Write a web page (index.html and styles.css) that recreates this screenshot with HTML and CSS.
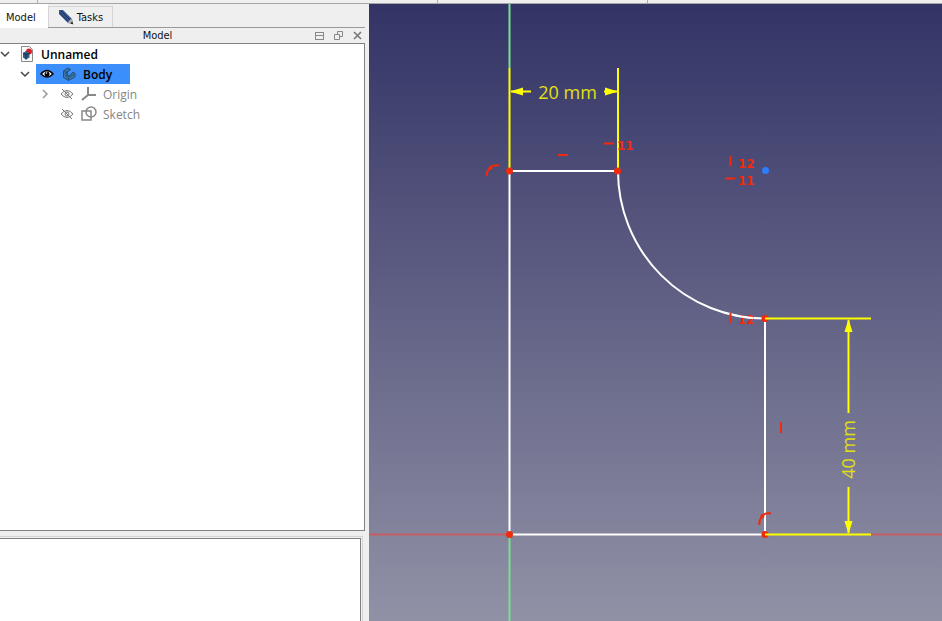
FILE: index.html
```
<!DOCTYPE html>
<html lang="en">
<head>
    <meta charset="UTF-8">
    <meta name="viewport" content="width=device-width, initial-scale=1.0">
    <title>Unnamed - Sketch</title>
    <link rel="stylesheet" href="styles.css">
</head>
<body>
    <header class="toolbar">
        <span class="toolbar-group group-small"></span>
        <span class="toolbar-group group-wide"></span>
        <span class="toolbar-group group-medium"></span>
    </header>
    <main class="workspace">
        <aside class="side">
            <nav class="tabs">
                <button type="button" class="tab active">Model</button>
                <button type="button" class="tab">
                    <svg class="icon" width="16" height="16" viewBox="0 0 16 16">
                        <path d="M1 1 L5 1 L14 10 L15 15 L10 14 L1 5 Z" fill="#34548c"/>
                        <path d="M3 2 L12 11 M1.5 4 L10.5 13" stroke="#1d305c" fill="none"/>
                        <path d="M13.5 9.5 L15 15 L9.5 13.5 Z" fill="#b9b4aa"/>
                        <path d="M14 12.5 L15.5 15.5 L12.5 14.5 Z" fill="#222"/>
                    </svg>
                    Tasks
                </button>
            </nav>
            <div class="dock-title">
                <h1>Model</h1>
                <div class="dock-buttons">
                    <button type="button" aria-label="Collapse">
                        <svg width="9" height="9" viewBox="0 0 9 9"><path d="M.5 1.5 H8.5 M.5 4.5 H8.5 M.5 8.5 H8.5 M.5 1 V9 M8.5 1 V9" fill="none" stroke="#888"/></svg>
                    </button>
                    <button type="button" aria-label="Float">
                        <svg width="9" height="9" viewBox="0 0 9 9"><path d="M3.5 3 V.5 H8.5 V5.5 H6 M.5 3.5 H5.5 V8.5 H.5 Z" fill="none" stroke="#888"/></svg>
                    </button>
                    <button type="button" aria-label="Close">
                        <svg width="9" height="9" viewBox="0 0 9 9"><path d="M1 1 L8 8 M8 1 L1 8" fill="none" stroke="#777" stroke-width="1.6"/></svg>
                    </button>
                </div>
            </div>
            <section class="tree">
                <ul>
                    <li>
                        <div class="row">
                            <button type="button" class="arrow" aria-label="Collapse Unnamed">
                                <svg width="10" height="10" viewBox="0 0 10 10"><path d="M1 3 L5 7 L9 3" fill="none" stroke="#444" stroke-width="1.5"/></svg>
                            </button>
                            <svg class="icon doc" width="12" height="16" viewBox="0 0 12 16">
                                <path d="M.5 .5 H8.5 L11.5 3.5 V15.5 H.5 Z" fill="#fafafa" stroke="#8b8b8b"/>
                                <circle cx="8" cy="5.5" r="3" fill="#d3202c"/>
                                <path d="M2 7 L5 5 L8.5 7.5 V11.5 L5 13.5 L2 11.5 Z" fill="#2f5b84"/>
                                <path d="M2 7 L5 8.5 L8.5 7.5 M5 8.5 V13.5" fill="none" stroke="#16334f"/>
                            </svg>
                            <span class="name strong">Unnamed</span>
                        </div>
                        <ul>
                            <li>
                                <div class="row">
                                    <button type="button" class="arrow" aria-label="Collapse Body">
                                        <svg width="10" height="10" viewBox="0 0 10 10"><path d="M1 3 L5 7 L9 3" fill="none" stroke="#444" stroke-width="1.5"/></svg>
                                    </button>
                                    <div class="item selected">
                                        <button type="button" class="eye" aria-label="Hide Body">
                                            <svg width="14" height="12" viewBox="0 0 14 12">
                                                <path d="M1 6 Q7 -1 13 6 Q7 12 1 6 Z" fill="#fff" stroke="#000" stroke-width="1.5"/>
                                                <circle cx="7" cy="6" r="2.5"/>
                                                <circle cx="6.5" cy="5" r=".8" fill="#fff"/>
                                            </svg>
                                        </button>
                                        <svg class="icon" width="16" height="16" viewBox="0 0 16 16">
                                            <path d="M2.5 5 L7 2 L9.500 3.500 L6.500 5.500 V9.500 L8 10 L12 6 L14 7.500 V11 L7.500 14.500 L2.500 11.500 Z" fill="#3d78ad" stroke="#24507a"/>
                                            <path d="M2.5 5 L5 6.500 V10 L7.500 11.500 V14.500 M5 6.500 L9.500 3.500 M7.500 11.500 L14 7.500" fill="none" stroke="#24507a"/>
                                        </svg>
                                        <span class="name strong">Body</span>
                                    </div>
                                </div>
                                <ul>
                                    <li class="row">
                                        <button type="button" class="arrow" aria-label="Expand Origin">
                                            <svg width="10" height="10" viewBox="0 0 10 10"><path d="M3 1 L7 5 L3 9" fill="none" stroke="#999" stroke-width="1.5"/></svg>
                                        </button>
                                        <div class="item">
                                            <button type="button" class="eye" aria-label="Show Origin">
                                                <svg width="14" height="12" viewBox="0 0 14 12">
                                                    <path d="M1 6 Q7 -1 13 6 Q7 13 1 6 Z M2 1 L12 11" fill="none" stroke="#777"/>
                                                    <circle cx="7" cy="6" r="2" fill="none" stroke="#777"/>
                                                </svg>
                                            </button>
                                            <svg class="icon" width="16" height="16" viewBox="0 0 16 16"><path d="M7 1 V9 H15 M7 9 L1 14" fill="none" stroke="#888" stroke-width="2"/></svg>
                                            <span class="name">Origin</span>
                                        </div>
                                    </li>
                                    <li class="row">
                                        <span class="arrow"></span>
                                        <div class="item">
                                            <button type="button" class="eye" aria-label="Show Sketch">
                                                <svg width="14" height="12" viewBox="0 0 14 12">
                                                    <path d="M1 6 Q7 -1 13 6 Q7 13 1 6 Z M2 1 L12 11" fill="none" stroke="#777"/>
                                                    <circle cx="7" cy="6" r="2" fill="none" stroke="#777"/>
                                                </svg>
                                            </button>
                                            <svg class="icon" width="16" height="16" viewBox="0 0 16 16"><path d="M1 5 H10 V14 H1 Z" fill="none" stroke="#888" stroke-width="1.5"/><circle cx="10" cy="6" r="5" fill="none" stroke="#888" stroke-width="1.5"/></svg>
                                            <span class="name">Sketch</span>
                                        </div>
                                    </li>
                                </ul>
                            </li>
                        </ul>
                    </li>
                </ul>
            </section>
            <section class="properties"><div class="property-list"></div></section>
        </aside>
        <section class="view">
            <svg class="sketch" viewBox="369 4 573 617" preserveAspectRatio="xMinYMin slice" role="img" aria-label="Sketch view">
                <!-- axes -->
                <path class="axis-x" d="M369 534.5 H509 M871 534.5 H942"/>
                <path class="axis-y" d="M509.5 4 V68 M509.5 535 V621"/>

                <!-- profile -->
                <path class="edge" d="M509.5 171 H618 A147.5 147.5 0 0 0 765 318.5 V534.5 H509.5 Z"/>

                <!-- horizontal dimension -->
                <path class="dim" d="M509.5 68 V171 M618 68 V171 M511 91.5 H531 M604 91.5 H617"/>
                <path class="dim-head" d="M510 91.5 L523 87.5 V95.5 Z M618 91.5 L605 87.5 V95.5 Z"/>
                <text class="dim-text" x="567.5" y="99">20 mm</text>

                <!-- points -->
                <g class="point">
                    <circle cx="509.5" cy="171" r="3.5"/>
                    <circle cx="617.5" cy="171" r="3.5"/>
                    <circle cx="765" cy="318.5" r="3.5"/>
                    <circle cx="765" cy="534.5" r="3.5"/>
                    <circle cx="509.5" cy="534.5" r="3.5"/>
                </g>
                <circle class="center" cx="765.5" cy="170.5" r="3.5"/>

                <!-- vertical dimension -->
                <path class="dim" d="M765 318.5 H871 M765 534.5 H871 M848.5 320 V413 M848.5 487 V533"/>
                <path class="dim-head" d="M848.5 319 L844.5 332 H852.5 Z M848.5 534 L844.5 521 H852.5 Z"/>
                <text class="dim-text" transform="translate(855 449.5) rotate(-90)">40 mm</text>

                <!-- constraints -->
                <path class="mark" d="M558 155 H568 M604 143.5 H614 M725 178.5 H735 M730.5 156 V166 M730.5 313 V323 M781 422 V433"/>
                <path class="mark" d="M487 176 Q486 172 490 168 M489 169 Q492 164.5 499 165.5"/>
                <path class="mark" d="M759.5 525 Q758.5 520 763 516 M761 517 Q764 512.5 771 513.5"/>
                <circle class="mark-dot" cx="490.5" cy="168" r="2"/>
                <circle class="mark-dot" cx="762.5" cy="516" r="2"/>
                <text class="mark-text" x="617" y="150">11</text>
                <text class="mark-text" x="738" y="168">12</text>
                <text class="mark-text" x="738" y="185">11</text>
                <text class="mark-text" x="738" y="324">12</text>
                <path class="edge" d="M734 315 Q744 317.5 753 318"/>
            </svg>
        </section>
    </main>
</body>
</html>
```
FILE: styles.css
```
:root {
    --panel: #efefef;
    --border: #828282;
    --dim: #ffff00;
    --mark: #f02a0c;
}
* {
    box-sizing: border-box;
}
body {
    margin: 0;
    height: 100vh;
    display: flex;
    flex-direction: column;
    overflow: hidden;
    background: var(--panel);
    color: #111;
    font-family: "Open Sans", "Noto Sans", sans-serif;
    font-size: 12px;
}
button {
    border: none;
    background: none;
    padding: 0;
    margin: 0;
    color: inherit;
    font: inherit;
}
svg {
    display: block;
}
ul {
    list-style: none;
    margin: 0;
    padding: 0;
}
.toolbar {
    display: flex;
    height: 4px;
    flex: none;
    border-bottom: 1px solid #a5a5a5;
}
.toolbar-group {
    border-right: 1px solid #aaa;
}
.group-small {
    width: 38px;
}
.group-wide {
    width: 400px;
}
.group-medium {
    width: 210px;
}
.workspace {
    display: flex;
    flex: 1;
    min-height: 0;
}
.side {
    display: flex;
    flex-direction: column;
    width: 365px;
    margin-right: 4px;
    flex: none;
}
.tabs,
.dock-title h1 {
    font-family: "DejaVu Sans Condensed", "Open Sans", sans-serif;
    font-size: 11px;
}
.tabs {
    display: flex;
    height: 24px;
    flex: none;
    border-bottom: 1px solid #999;
}
.tab {
    display: flex;
    align-items: center;
    gap: 3px;
    margin-top: 2px;
    padding: 0 9px;
    border: 1px solid #d5d5d5;
    border-bottom: none;
}
.tab.active {
    margin: 0 0 -1px;
    padding: 2px 12px 0 6px;
    background: #fff;
    border: none;
}
.dock-title {
    display: grid;
    grid-template-columns: 1fr auto;
    align-items: center;
    height: 15px;
    flex: none;
}
.dock-title h1 {
    margin: 0;
    font-weight: 400;
    line-height: 15px;
    text-align: center;
}
.dock-buttons {
    display: flex;
    gap: 10px;
    padding-right: 3px;
}
.tree {
    flex: 1;
    min-height: 0;
    background: #fff;
    border: 1px solid var(--border);
    border-left: none;
}
.tree ul ul {
    padding-left: 20px;
}
.row {
    display: flex;
    align-items: center;
    height: 20px;
}
.arrow {
    width: 10px;
    flex: none;
}
.doc {
    margin-left: 11px;
}
.item {
    display: flex;
    align-items: center;
    height: 20px;
    margin-left: 6px;
    padding: 0 18px 0 4px;
    color: #858585;
}
.item .icon {
    margin-left: 7px;
}
.item .name {
    margin-left: 6px;
}
.name {
    margin-left: 8px;
    padding-top: 2px;
    line-height: 18px;
}
.strong {
    font-weight: 600;
    color: #000;
}
.selected {
    background: #3c8efa;
}
.properties {
    display: flex;
    height: 85px;
    margin: 5px 2px 0 0;
    flex: none;
    border-top: 1px solid #d5d5d5;
    border-right: 1px solid #d5d5d5;
    padding: 1px 1px 0 0;
}
.property-list {
    flex: 1;
    background: #fff;
    border-top: 1px solid var(--border);
    border-right: 1px solid var(--border);
}
.view {
    flex: 1;
    min-width: 0;
    background: linear-gradient(#333366, #9191a6);
}
.sketch {
    width: 100%;
    height: 100%;
}
.axis-x {
    stroke: #c65f64;
    stroke-width: 2;
}
.axis-y {
    stroke: #79df91;
    stroke-width: 2;
}
.edge {
    fill: none;
    stroke: #fff;
    stroke-width: 2;
}
.dim {
    fill: none;
    stroke: var(--dim);
    stroke-width: 2;
}
.dim-head {
    fill: var(--dim);
}
.dim-text {
    fill: #e0e010;
    font-size: 18px;
    text-anchor: middle;
}
.point,
.mark-dot {
    fill: var(--mark);
}
.center {
    fill: #2d7dff;
}
.mark {
    fill: none;
    stroke: var(--mark);
    stroke-width: 2;
}
.mark-text {
    fill: var(--mark);
    font-family: "DejaVu Sans", sans-serif;
    font-size: 12px;
    font-weight: 700;
}
```
